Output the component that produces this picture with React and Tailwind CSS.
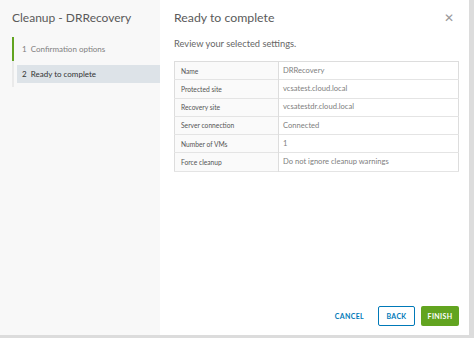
import React from "react";

const ROWS = [
  ["Name", "DRRecovery"],
  ["Protected site", "vcsatest.cloud.local"],
  ["Recovery site", "vcsatestdr.cloud.local"],
  ["Server connection", "Connected"],
  ["Number of VMs", "1"],
  ["Force cleanup", "Do not ignore cleanup warnings"],
];

const App = () => {
  return (
    <div
      className="w-[474px] h-[338px] bg-[#dcdcdc] overflow-hidden"
      style={{ fontFamily: "Lato, 'Open Sans', sans-serif" }}
    >
      <div className="w-[469px] h-[335px] flex bg-white">
        {/* steps */}
        <div className="w-[160px] shrink-0 bg-[#f8f8f8] pt-[9px]">
          <h1 className="pl-[12px] whitespace-nowrap text-[12px] leading-[18px] text-[#5a5a5a]">Cleanup - DRRecovery</h1>
          <div className="mt-[10px] ml-[12px] border-l-2 border-[#eaeaea] pb-[4px]">
            <div className="-ml-[2px] border-l-2 border-[#62a420] h-[24px] flex items-center pl-[8px] text-[8px] text-[#808080]">
              1&nbsp;&nbsp;Confirmation options
            </div>
            <div className="mt-[4px] ml-[3px] h-[18px] bg-[#dde3e8] flex items-center pl-[5px] text-[8px] text-[#333]">
              2&nbsp;&nbsp;Ready to complete
            </div>
          </div>
        </div>

        {/* content */}
        <div className="flex-1 flex flex-col pl-[14px] pr-[10px] pt-[9px] pb-[9px]">
          <div className="flex items-center justify-between">
            <h2 className="text-[12.3px] leading-[18px] text-[#5a5a5a]">Ready to complete</h2>
            <span className="text-[#999] text-[12px] leading-none mr-[5px]">✕</span>
          </div>
          <p className="mt-[10px] text-[9.3px] text-[#666]">Review your selected settings.</p>

          <table className="mt-[10px] w-[285px] border-collapse border border-[#ddd]">
            <tbody>
              {ROWS.map(([k, v]) => (
                <tr key={k} className="h-[18.3px] border-b border-[#e4e4e4]">
                  <td className="w-[104px] bg-[#fafafa] border-r border-[#ddd] pl-[6px] text-[6.7px] text-[#555]">{k}</td>
                  <td className="pl-[4px] text-[7.6px] text-[#808080]">{v}</td>
                </tr>
              ))}
            </tbody>
          </table>

          <div className="mt-auto flex items-center justify-end gap-[6px]">
            <button className="px-[8px] h-[20px] text-[7px] font-bold tracking-wider text-[#0079b8]">CANCEL</button>
            <button className="w-[37px] h-[20px] border border-[#0079b8] rounded-[2px] text-[7px] font-bold tracking-wider text-[#0079b8] bg-white">BACK</button>
            <button className="w-[38px] h-[20px] rounded-[2px] bg-[#62a420] text-[7px] font-bold tracking-wider text-white">FINISH</button>
          </div>
        </div>
      </div>
    </div>
  );
};

export default App;
